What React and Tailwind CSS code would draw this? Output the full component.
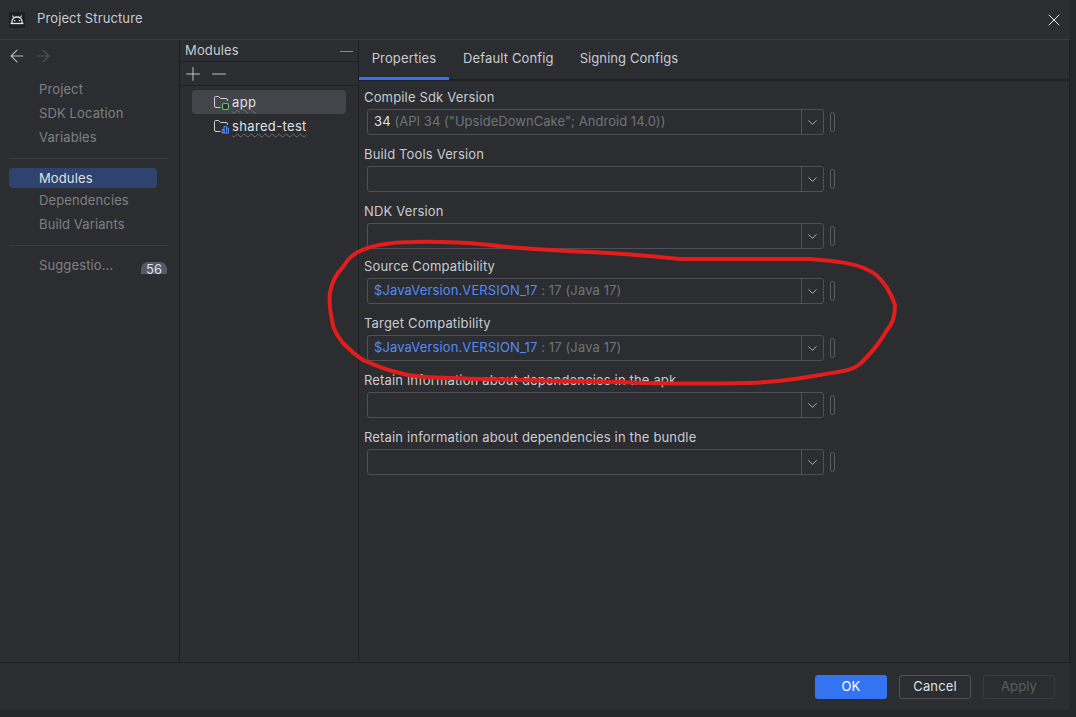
import React from "react";
import { X, Plus, Minus, ArrowLeft, ArrowRight, ChevronDown } from "lucide-react";

function Nav({ children, active }) {
  return (
    <div className={`h-[20px] w-[148px] ml-[9px] pl-[30px] pt-[1px] flex items-center rounded-[4px] text-[13px] tracking-[0.12px] ${active ? "bg-[#2e436e] text-[#dfe1e5]" : "text-[#7e8085]"}`}>
      {children}
    </div>
  );
}

function Field({ label, children, short }) {
  return (
    <div className={`${short ? "h-[55px]" : "h-[57px]"} pl-[5px]`}>
      <div className="h-[17px] flex items-center text-[13px] tracking-[0.16px] text-[#c9cbd0] whitespace-nowrap">{label}</div>
      <div className="mt-[3px] flex items-center">
        <div className="ml-[3px] w-[457px] h-[26px] border border-[#4e5157] rounded-[3px] flex items-center">
          <div className="flex-1 pl-[6px] text-[13px] tracking-[0.12px] whitespace-nowrap overflow-hidden">{children}</div>
          <div className="w-[22px] h-full border-l border-[#4e5157] flex items-center justify-center">
            <ChevronDown size={15} strokeWidth={1.5} className="text-[#b4b8bf]" />
          </div>
        </div>
        <div className="ml-[6px] w-[5px] h-[20px] border border-[#5a5d63] rounded-[3px]" />
      </div>
    </div>
  );
}

function FolderIcon({ children }) {
  return (
    <svg width="17" height="16" viewBox="0 0 17 16" fill="none" className="shrink-0">
      <path d="M1.5 12V3.5a1 1 0 0 1 1-1h3.2l1.8 2H13a1.5 1.5 0 0 1 1.5 1.5V7M1.5 12a1.5 1.5 0 0 0 1.5 1.5h4.5" stroke="#ced0d6" strokeWidth="1" />
      {children}
    </svg>
  );
}

export default function App() {
  return (
    <div className="relative w-[1076px] h-[717px] overflow-hidden bg-[#26272a] text-[#dfe1e5] font-['Inter',sans-serif]">
      <div className="w-[1070px] h-[710px] bg-[#2b2d30] flex flex-col">
        <div className="h-[39px] flex items-center shrink-0 border-b border-[#393b40] box-content">
          <div className="ml-[9px] w-[16px] h-[16px] bg-[#1e1f22] flex items-center justify-center">
            <svg width="14" height="12" viewBox="0 0 14 12" fill="none">
              <path d="M2 9V7.500a5 4.500 0 0 1 10 0V9" stroke="#e6e6e6" strokeWidth="1.300" />
              <path d="M3.500 3.500L2.500 1.500M10.500 3.500l1-2" stroke="#e6e6e6" strokeWidth="1.100" />
              <path d="M0.500 9.500h13" stroke="#e6e6e6" strokeWidth="1.300" />
              <rect x="4" y="6" width="1.300" height="1.300" fill="#e6e6e6" />
              <rect x="8.700" y="6" width="1.300" height="1.300" fill="#e6e6e6" />
            </svg>
          </div>
          <div className="ml-[12px] pb-[1px] text-[13px] tracking-[0.12px] text-[#c9cbd0]">Project Structure</div>
          <X size={20} strokeWidth={1.200} className="ml-auto mr-[6px] text-[#e8e9ec]" />
        </div>

        <div className="flex h-[622px] shrink-0">
          <div className="w-[179px] shrink-0">
            <div className="h-[32px] flex items-center pl-[7px] gap-[6px]">
              <ArrowLeft size={20} strokeWidth={1.300} className="text-[#b9bbc0]" />
              <ArrowRight size={20} strokeWidth={1.300} className="text-[#54565b]" />
            </div>
            <div className="mt-[7px] flex flex-col gap-[4px]">
              <Nav>Project</Nav>
              <Nav>SDK Location</Nav>
              <Nav>Variables</Nav>
            </div>
            <div className="mt-[11px] ml-[9px] mr-[11px] h-px bg-[#393b40]" />
            <div className="mt-[9px]"><Nav active>Modules</Nav></div>
            <div className="mt-[2px] flex flex-col gap-[4px]">
              <Nav>Dependencies</Nav>
              <Nav>Build Variants</Nav>
            </div>
            <div className="mt-[11px] ml-[9px] mr-[11px] h-px bg-[#393b40]" />
            <div className="mt-[9px] relative">
              <Nav>Suggestio...</Nav>
              <div className="absolute left-[141px] top-[7px] w-[26px] h-[12px] overflow-hidden rounded-t-[7px] bg-[#55596a] text-[13px] leading-[15px] text-center text-[#dfe1e5]">56</div>
            </div>
          </div>

          <div className="w-[180px] shrink-0 border-l border-r border-[#1e1f22] flex flex-col">
            <div className="h-[20px] pt-[1px] border-b border-[#1e1f22] box-content flex items-center pl-[5px] pr-[5px] text-[13px] tracking-[0.14px] text-[#c9cbd0]">
              Modules
              <div className="ml-auto w-[13px] h-px bg-[#8a8c91]" />
            </div>
            <div className="h-[23px] border-b border-[#1e1f22] box-content flex items-center pl-[2px] gap-[4px]">
              <Plus size={22} strokeWidth={1} className="text-[#ced0d6]" />
              <Minus size={22} strokeWidth={1} className="text-[#ced0d6]" />
            </div>
            <div className="mt-[4px] ml-[12px] w-[154px] h-[24px] rounded-[4px] bg-[#43454a] flex items-center pl-[21px] gap-[2px] text-[13px] tracking-[0.35px]">
              <FolderIcon><rect x="9.500" y="9.500" width="6" height="6" rx="1.500" fill="#2b2d30" stroke="#57c268" strokeWidth="1.200" /></FolderIcon>
              <span className="pt-[1px] underline decoration-wavy decoration-[#6e7076] decoration-1 underline-offset-2">app</span>
            </div>
            <div className="ml-[12px] w-[154px] h-[24px] flex items-center pl-[21px] gap-[2px] text-[13px] tracking-[0.35px]">
              <FolderIcon><path d="M9 15V11.500h2V15zM11 15V8.500h2.500V15zM13.500 15v-5h2V15z" fill="#2b2d30" stroke="#548af7" strokeWidth="1" /></FolderIcon>
              <span className="pt-[2px] underline decoration-wavy decoration-[#6e7076] decoration-1 underline-offset-2">shared-test</span>
            </div>
          </div>

          <div className="flex-1 min-w-0 border-r border-[#1e1f22]">
            <div className="h-[39px] border-b-2 border-[#1e1f22] flex text-[13px] tracking-[0.14px] text-[#c9cbd0] box-content">
              <div className="relative w-[90px] pb-[1px] flex items-center justify-center">
                Properties
                <div className="absolute left-0 right-0 -bottom-[1px] h-[3px] bg-[#3574f0]" />
              </div>
              <div className="ml-[14px] pb-[1px] flex items-center">Default Config</div>
              <div className="ml-[26px] pb-[1px] tracking-[0.08px] flex items-center">Signing Configs</div>
            </div>
            <div className="pt-[8px]">
              <Field label="Compile Sdk Version"><span className="text-[#dfe1e5]">34 </span><span className="text-[#6f737a] tracking-[0.04px]">(API 34 ("UpsideDownCake"; Android 14.0))</span></Field>
              <Field label="Build Tools Version" />
              <Field short label="NDK Version" />
              <Field label="Source Compatibility"><span className="text-[#548af7]">$JavaVersion.VERSION_17</span><span className="text-[#6f737a]"> : 17 (Java 17)</span></Field>
              <Field label="Target Compatibility"><span className="text-[#548af7]">$JavaVersion.VERSION_17</span><span className="text-[#6f737a]"> : 17 (Java 17)</span></Field>
              <Field label="Retain information about dependencies in the apk" />
              <Field label="Retain information about dependencies in the bundle" />
            </div>
          </div>
        </div>

        <div className="h-[48px] shrink-0 border-t border-[#1e1f22] pt-[1px] flex items-center justify-end pr-[15px] text-[13px] tracking-[0.14px]">
          <div className="w-[72px] h-[24px] rounded-[3px] bg-[#3574f0] text-white flex items-center justify-center">OK</div>
          <div className="ml-[12px] w-[72px] h-[24px] rounded-[3px] border border-[#4e5157] text-[#dfe1e5] flex items-center justify-center">Cancel</div>
          <div className="ml-[12px] w-[72px] h-[24px] rounded-[3px] border border-[#393b40] text-[#5a5d63] flex items-center justify-center">Apply</div>
        </div>
      </div>

      <svg className="absolute left-0 top-0 pointer-events-none" width="1076" height="717" fill="none">
        <path d="M358 252C372 245 392 242 413 242C440 241 460 243 470 243C490 245 505 247 520 248C545 250 565 251 587 252C620 253 650 256 680 259C720 259 770 259 810 259C835 261 855 263 868 270C880 275 890 290 895 305C895 318 892 325 887 330C878 345 872 352 860 364C850 372 835 372 820 375C800 378 780 382 750 383C700 384 660 384 620 382C560 381 500 380 453 378C430 378 410 376 400 373C385 370 372 364 363 360C355 355 350 350 343 343C337 335 333 330 332 320C330 310 329 300 330 293C332 280 338 272 343 267C347 260 352 255 358 252Z" stroke="#e31c1c" strokeWidth="4" strokeLinejoin="round" />
      </svg>
    </div>
  );
}
